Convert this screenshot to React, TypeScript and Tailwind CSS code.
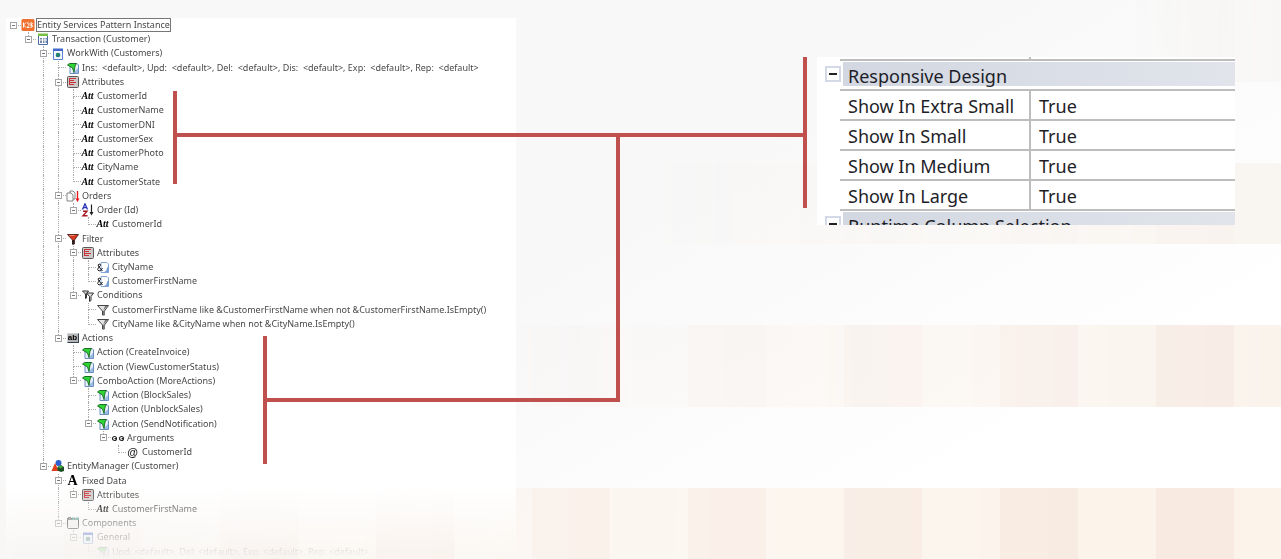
import type { ReactNode } from "react";

type IconName =
  | "k2b"
  | "transaction"
  | "window"
  | "action"
  | "attributes"
  | "att"
  | "orders"
  | "order"
  | "filter"
  | "variable"
  | "conditions"
  | "condition"
  | "actions"
  | "arguments"
  | "at"
  | "entity"
  | "fixed"
  | "components";

type TreeRow = {
  depth: number;
  icon: IconName;
  label: string;
  leaf?: boolean;
};

type Property = {
  id: string;
  label: string;
  value: string;
};

const rows: TreeRow[] = [
  { depth: 0, icon: "k2b", label: "Entity Services Pattern Instance" },
  { depth: 1, icon: "transaction", label: "Transaction (Customer)" },
  { depth: 2, icon: "window", label: "WorkWith (Customers)" },
  {
    depth: 3,
    icon: "action",
    label:
      "Ins:  <default>, Upd:  <default>, Del:  <default>, Dis:  <default>, Exp:  <default>, Rep:  <default>",
    leaf: true,
  },
  { depth: 3, icon: "attributes", label: "Attributes" },
  { depth: 4, icon: "att", label: "CustomerId", leaf: true },
  { depth: 4, icon: "att", label: "CustomerName", leaf: true },
  { depth: 4, icon: "att", label: "CustomerDNI", leaf: true },
  { depth: 4, icon: "att", label: "CustomerSex", leaf: true },
  { depth: 4, icon: "att", label: "CustomerPhoto", leaf: true },
  { depth: 4, icon: "att", label: "CityName", leaf: true },
  { depth: 4, icon: "att", label: "CustomerState", leaf: true },
  { depth: 3, icon: "orders", label: "Orders" },
  { depth: 4, icon: "order", label: "Order (Id)" },
  { depth: 5, icon: "att", label: "CustomerId", leaf: true },
  { depth: 3, icon: "filter", label: "Filter" },
  { depth: 4, icon: "attributes", label: "Attributes" },
  { depth: 5, icon: "variable", label: "CityName", leaf: true },
  { depth: 5, icon: "variable", label: "CustomerFirstName", leaf: true },
  { depth: 4, icon: "conditions", label: "Conditions" },
  {
    depth: 5,
    icon: "condition",
    label:
      "CustomerFirstName like &CustomerFirstName when not &CustomerFirstName.IsEmpty()",
    leaf: true,
  },
  {
    depth: 5,
    icon: "condition",
    label: "CityName like &CityName when not &CityName.IsEmpty()",
    leaf: true,
  },
  { depth: 3, icon: "actions", label: "Actions" },
  { depth: 4, icon: "action", label: "Action (CreateInvoice)", leaf: true },
  { depth: 4, icon: "action", label: "Action (ViewCustomerStatus)", leaf: true },
  { depth: 4, icon: "action", label: "ComboAction (MoreActions)" },
  { depth: 5, icon: "action", label: "Action (BlockSales)", leaf: true },
  { depth: 5, icon: "action", label: "Action (UnblockSales)", leaf: true },
  { depth: 5, icon: "action", label: "Action (SendNotification)" },
  { depth: 6, icon: "arguments", label: "Arguments" },
  { depth: 7, icon: "at", label: "CustomerId", leaf: true },
  { depth: 2, icon: "entity", label: "EntityManager (Customer)" },
  { depth: 3, icon: "fixed", label: "Fixed Data" },
  { depth: 4, icon: "attributes", label: "Attributes" },
  { depth: 5, icon: "att", label: "CustomerFirstName", leaf: true },
  { depth: 3, icon: "components", label: "Components" },
  { depth: 4, icon: "window", label: "General" },
  {
    depth: 5,
    icon: "action",
    label: "Upd: <default>, Del: <default>, Exp: <default>, Rep: <default>",
    leaf: true,
  },
];

const properties: Property[] = [
  { id: "xs", label: "Show In Extra Small", value: "True" },
  { id: "sm", label: "Show In Small", value: "True" },
  { id: "md", label: "Show In Medium", value: "True" },
  { id: "lg", label: "Show In Large", value: "True" },
];

// true when another row of the same depth follows under the same parent
const hasNext = (index: number, depth: number) => {
  for (let i = index + 1; i < rows.length; i++) {
    if (rows[i].depth < depth) return false;
    if (rows[i].depth === depth) return true;
  }
  return false;
};

const Svg = ({ children }: { children: ReactNode }) => (
  <svg viewBox="0 0 14 14" className="size-3.5 shrink-0" aria-hidden="true">
    {children}
  </svg>
);

const icons: Record<IconName, ReactNode> = {
  k2b: (
    <Svg>
      <rect x="0.5" y="1" width="13" height="12" rx="1.5" fill="#f0702e" />
      <path
        d="M2.500 4.500v5M5 4.500l-2.500 2.500L5 9.500M6 5.500q1.500-2 2 0T6 9.500h2.500M10 4.500v5M10 4.500q3 1 0 2.500q3.500 1 0 2.500"
        fill="none"
        stroke="#fff"
      />
    </Svg>
  ),
  transaction: (
    <Svg>
      <path d="M2.500 3v9.500h9V3" fill="#fff" stroke="#4a6da8" />
      <path d="M2 1.500h10V4H2z" fill="#7cc043" />
      <path
        d="M4 6h2v1.500H4zM7 6h1.500v1.500H7zM9.500 6H11v1.500H9.500zM4 8.500h2V11H4zM7 8.500h1.500V11H7zM9.500 8.500H11V11H9.500z"
        fill="#7887a8"
      />
    </Svg>
  ),
  window: (
    <Svg>
      <path d="M2.500 3v9.500h9V3" fill="#f4f8ff" stroke="#5b83cd" />
      <path d="M2 1.500h10V4H2z" fill="#4468cc" />
      <circle cx="7" cy="8" r="2.300" fill="#1f6d80" />
      <path d="M5.500 7q1.500-1.500 2.500.5l-1 2z" fill="#2f9950" />
    </Svg>
  ),
  action: (
    <Svg>
      <path d="M4 2.500h7l1.500 1.500v8.500H4z" fill="#e8f0fb" stroke="#6d8fc0" />
      <path d="M7 12h5V7z" fill="#9dbce5" />
      <path
        d="m1.500 4 2-1.500h7L9 5 8 11.500 6.500 7z"
        fill="#2fd435"
        stroke="#17651d"
        strokeWidth="0.900"
      />
    </Svg>
  ),
  attributes: (
    <Svg>
      <rect x="1.500" y="1.500" width="11" height="11" rx="1" fill="#cfcaca" stroke="#5c5858" />
      <path d="M4 3.500h6M4 5.500h4M4 7.500h6M4 9.500h4" stroke="#c8323a" />
      <path d="M3.500 3v7" stroke="#c8323a" />
    </Svg>
  ),
  att: (
    <span className="font-['Liberation_Serif',serif] text-[10px] leading-none font-bold italic text-black">
      Att
    </span>
  ),
  orders: (
    <Svg>
      <path d="M1 4h4l2 2v6H1zM4 4V2h3l2 2v6H7" fill="#fff" stroke="#777" strokeWidth="0.900" />
      <path d="M11.500 2v9" stroke="#e8131b" strokeWidth="1.300" />
      <path d="M9.500 9.500h4l-2 3.500z" fill="#e8131b" />
    </Svg>
  ),
  order: (
    <Svg>
      <path d="M1.500 6.500 4 .8l2.500 5.700M2.500 4.700h3" fill="none" stroke="#2932b5" strokeWidth="1.300" />
      <path d="M2 8.300h4L2 12.800h4.500" fill="none" stroke="#a61927" strokeWidth="1.400" />
      <path d="M10.500 1.500V11" stroke="#222" strokeWidth="1.200" />
      <path d="M8.500 9h4l-2 3.500z" fill="#222" />
    </Svg>
  ),
  filter: (
    <Svg>
      <path d="M1.500 2.500h11L8.500 8v4h-2V8z" fill="#d9381c" stroke="#4d2320" strokeWidth="0.900" />
      <path d="M3.500 3.500h5" stroke="#f68a70" />
      <path d="M8 8v4.500H6V8z" fill="#2e2020" />
    </Svg>
  ),
  variable: (
    <Svg>
      <path d="M5 2.500h6l1.500 1.500v8.500H5z" fill="#fff" stroke="#86a8d8" />
      <path d="M7 12.500q4-1 4-5l2-1v6z" fill="#7aa0d8" />
      <path
        d="M6.500 11 2.500 6.500q-1-2 .5-2.500 2 0 1.500 1.500L2.500 7.500q-2 2.500.5 3.500 2 0 3.500-3"
        fill="none"
        stroke="#222"
      />
    </Svg>
  ),
  conditions: (
    <Svg>
      <path d="M1.500 2h6L5.500 5v4l-1 .5V5z" fill="#ddd" stroke="#333" />
      <path d="M5.500 4h7L10 7.500v4l-1.500 1v-5z" fill="#ddd" stroke="#333" />
    </Svg>
  ),
  condition: (
    <Svg>
      <path d="M1.500 2.500h11L8.500 8v4h-2V8z" fill="#e4e4e4" stroke="#444" />
      <path d="m7 8 4.500-5H9zM7 8h2v4H7z" fill="#777" />
    </Svg>
  ),
  actions: (
    <span className="h-2.5 w-3 shrink-0 border border-t-gray-300 border-r-gray-700 border-b-gray-700 border-l-gray-300 bg-[#b5b5b5] text-center font-['Liberation_Sans',sans-serif] text-[8px] leading-[7px] font-bold text-black">
      ab
    </span>
  ),
  arguments: (
    <Svg>
      <circle cx="3.500" cy="7.500" r="2" fill="none" stroke="#222" strokeWidth="1.200" />
      <circle cx="10.500" cy="7.500" r="2" fill="none" stroke="#222" strokeWidth="1.200" />
      <path d="M3.500 7.500h2M10.500 7.500h2" stroke="#222" />
    </Svg>
  ),
  at: (
    <span className="font-['Liberation_Sans',sans-serif] text-[11px] leading-none font-bold text-[#222]">
      @
    </span>
  ),
  entity: (
    <Svg>
      <circle cx="7.500" cy="4" r="3" fill="#2b5fd0" />
      <path d="M4 4 8 12H.5z" fill="#e0401b" />
      <path d="m6.500 8 3.500-2 3 2v4l-3 1-3.500-1.500z" fill="#1d4c25" />
      <path d="M7 8 10 6.500 12 8 9.500 9.500z" fill="#45ad47" />
    </Svg>
  ),
  fixed: (
    <span className="font-['Liberation_Serif',serif] text-[14px] leading-none font-bold text-black">
      A
    </span>
  ),
  components: (
    <Svg>
      <rect x="1.500" y="3" width="11" height="9.500" rx="1" fill="#f2f2f2" stroke="#333" />
      <path d="M1.500 3q0-1.500 2-1.500t2 1.500z" fill="#fff" stroke="#333" />
      <path d="M6 2.500h3M10 2.500h3" stroke="#3b9a87" strokeWidth="1.800" />
    </Svg>
  ),
};

const Branch = ({ row, index }: { row: TreeRow; index: number }) => (
  <span className="grid w-[15px] shrink-0 place-items-center">
    <span className="col-start-1 row-start-1 flex h-full w-full flex-col pl-[7px]">
      <span
        className={`flex-1 border-b border-dotted border-[#aaa] ${
          row.depth > 0 ? "border-l" : ""
        }`}
      />
      <span
        className={`flex-1 border-dotted border-[#aaa] ${
          hasNext(index, row.depth) ? "border-l" : ""
        }`}
      />
    </span>
    {!row.leaf && (
      <button
        type="button"
        aria-label={`Collapse ${row.label}`}
        className="z-10 col-start-1 row-start-1 flex size-[7px] items-center justify-center border border-[#a5a5a5] bg-white"
      >
        <span className="h-px w-[3px] bg-[#777]" />
      </button>
    )}
  </span>
);

const PatternTree = () => (
  <ul
    role="tree"
    className="flex w-[510px] shrink-0 flex-col bg-white font-['Noto_Sans',sans-serif] text-[9px] leading-[14px] text-[#484848] [mask-image:linear-gradient(to_bottom,#000_86%,transparent_100%)]"
  >
    {rows.map((row, index) => (
      <li
        key={index}
        role="treeitem"
        aria-level={row.depth + 1}
        className="flex flex-1 basis-0 whitespace-pre"
      >
        {Array.from({ length: row.depth }, (_, depth) => (
          <span key={depth} className="w-[15px] shrink-0 pl-[7px]">
            <span
              className={`block h-full border-dotted border-[#aaa] ${
                depth > 0 && hasNext(index, depth) ? "border-l" : ""
              }`}
            />
          </span>
        ))}
        <Branch row={row} index={index} />
        <span className="flex w-[13px] shrink-0 items-center justify-center">
          {icons[row.icon]}
        </span>
        {row.depth === 0 ? (
          <span className="ml-0.5 border border-[#777] leading-3">
            {row.label}
          </span>
        ) : (
          <span className="ml-[3px]">{row.label}</span>
        )}
      </li>
    ))}
  </ul>
);

const GroupHeader = ({ title }: { title: string }) => (
  <tr className="h-[30px]">
    <td className="p-0 pt-[5px] pl-2 align-top">
      <button
        type="button"
        aria-label={`Collapse ${title}`}
        className="flex size-4 items-center justify-center border-2 border-[#d3d9e6] bg-white"
      >
        <span className="h-0.5 w-2 bg-[#222]" />
      </button>
    </td>
    <th
      colSpan={2}
      scope="colgroup"
      className="border-b-2 border-[#bdbdbd] p-0 pl-[3px] text-left font-normal"
    >
      <div className="mb-0.5 h-6 bg-linear-to-r from-[#d2d7e1] to-[#e1e4eb] pl-[5px]">
        {title}
      </div>
    </th>
  </tr>
);

const PropertyGrid = () => (
  <div className="mt-[57px] h-[168px] w-[418px] shrink-0 overflow-hidden bg-white">
    <table className="w-full table-fixed border-separate border-spacing-0 font-['Noto_Sans',sans-serif] text-[18px] leading-[28px] text-[#1e1e28]">
      <colgroup>
        <col className="w-[23px]" />
        <col className="w-[191px]" />
        <col />
      </colgroup>
      <tbody>
        <tr className="h-1">
          <td className="p-0" />
          <td className="border-r-2 border-b-2 border-[#bdbdbd] p-0" />
          <td className="border-b-2 border-[#bdbdbd] p-0" />
        </tr>
        <GroupHeader title="Responsive Design" />
        {properties.map((property) => (
          <tr key={property.id} className="h-[30px]">
            <td className="p-0" />
            <th
              scope="row"
              className="border-r-2 border-b-2 border-[#bdbdbd] p-0 pl-2 text-left font-normal whitespace-nowrap"
            >
              <div className="h-7 pt-px">{property.label}</div>
            </th>
            <td className="border-b-2 border-[#bdbdbd] p-0 pl-2">
              <div className="h-7 pt-px">{property.value}</div>
            </td>
          </tr>
        ))}
        <GroupHeader title="Runtime Column Selection" />
      </tbody>
    </table>
  </div>
);

const Backdrop = () => (
  <div className="absolute inset-0 -z-10 flex flex-col overflow-hidden bg-linear-150 from-[#f8f8f8] from-45% to-white to-80%">
    <div className="h-[82px] bg-[linear-gradient(90deg,#f6f4f1_50%,#f8f7f5_50%)] bg-[length:156px_100%] bg-[position:64px_0] [mask-image:linear-gradient(90deg,transparent_88%,#000)]" />
    <div className="h-[81px]" />
    <div className="h-[81px] bg-[linear-gradient(90deg,#f8f2ed_50%,#f9f5f0_50%)] bg-[length:156px_100%] bg-[position:64px_0] [mask-image:linear-gradient(90deg,transparent_50%,#000)]" />
    <div className="h-[81px]" />
    <div className="h-[82px] bg-[linear-gradient(90deg,#f7ebe4_50%,#faf3ec_50%)] bg-[length:156px_100%] bg-[position:64px_0] [mask-image:linear-gradient(90deg,transparent_36%,#000)]" />
    <div className="h-[81px]" />
    <div className="flex-1 bg-[linear-gradient(90deg,#f8eae0_50%,#fcf3ea_50%)] bg-[length:156px_100%] bg-[position:64px_0] [mask-image:linear-gradient(90deg,#0003,#000_90%)]" />
  </div>
);

const Connectors = () => (
  <svg
    className="pointer-events-none absolute top-0 left-0 h-[480px] w-[820px]"
    viewBox="0 0 820 480"
    fill="none"
    stroke="#c0504d"
    strokeWidth="4"
    aria-hidden="true"
  >
    <path d="M175 91v93M175 135h630M805 57v151" />
    <path d="M265 336v128M265 400h353V135" />
  </svg>
);

const App = () => {
  return (
    <main className="relative isolate flex min-h-screen justify-between overflow-hidden pr-[46px] pl-1.5">
      <Backdrop />
      <div className="flex pt-[18px]">
        <PatternTree />
      </div>
      <PropertyGrid />
      <Connectors />
    </main>
  );
};

export default App;
